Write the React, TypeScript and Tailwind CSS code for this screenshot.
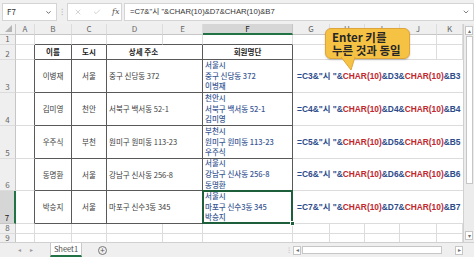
import { Check, ChevronDown, X } from "lucide-react"
import clsx from "clsx"

const members = [
  { name: "이병재", city: "서울", addr: "중구 신당동 372" },
  { name: "김미영", city: "천안", addr: "서북구 백서동 52-1" },
  { name: "우주식", city: "부천", addr: "원미구 원미동 113-23" },
  { name: "동명환", city: "서울", addr: "강남구 신사동 256-8" },
  { name: "박승지", city: "서울", addr: "마포구 신수3동 345" },
]

const COLS = ["A", "B", "C", "D", "E", "F", "G", "H", "I", "J", "K"]

// cell border presets
const LIGHT = "border-r border-b border-[#dcdcdc]"
const DARK = "border-r border-b border-[#595959]"
const RIGHT_DARK = "border-r border-b border-r-[#595959] border-b-[#dcdcdc]"
const BOTTOM_DARK = "border-r border-b border-r-[#dcdcdc] border-b-[#595959]"

function RowHead({ n, active }: { n: number; active?: boolean }) {
  return (
    <div
      className={clsx(
        "flex items-end justify-center pb-px text-[8px] leading-none",
        active
          ? "border-r-2 border-b border-r-[#217346] border-b-[#c6c6c6] bg-[#d6d6d6] text-[#222]"
          : "border-r border-b border-r-[#c6c6c6] border-b-[#dcdcdc] bg-[#efefef] text-[#666]"
      )}
    >
      {n}
    </div>
  )
}

function Formula({ row }: { row: number }) {
  const red = "text-[#c0282d]"
  return (
    <div className="col-span-5 flex items-center border-b border-[#dcdcdc] pl-[4px] font-['Liberation_Sans','Noto_Sans_CJK_KR',sans-serif] text-[8.4px] font-bold whitespace-nowrap text-[#2c4b8a]">
      =C{row}&amp;"시 "&amp;<span className={red}>CHAR(10)</span>&amp;D{row}&amp;
      <span className={red}>CHAR(10)</span>&amp;B{row}
    </div>
  )
}

function Callout() {
  return (
    <div className="absolute top-[4px] left-[325px] h-[31px] w-[85px] rounded-[6px] border border-[#dfa53a] bg-[#f6c244] pt-[2px] pl-[6px] text-[11.5px] leading-[13px] font-bold text-[#262626] shadow-[0_1px_2px_rgba(0,0,0,0.2)]">
      <div>Enter 키를</div>
      <div>누른 것과 동일</div>
      <svg className="absolute top-[28px] left-[14px]" width="17" height="14" viewBox="0 0 17 14">
        <polygon points="1,0 15,0 11,13" fill="#f6c244" />
        <polyline points="1,0 11,13 15,0" fill="none" stroke="#dfa53a" strokeWidth="1" />
      </svg>
    </div>
  )
}

function Sheet() {
  return (
    <div className="relative flex h-[218px]">
      <div className="grid h-[218px] w-[463px] grid-cols-[16px_19px_37px_35px_56px_40px_90px_37px_35px_35px_37px_26px] grid-rows-[11px_10px_15px_33px_33px_33px_32px_33px_10px_10px] overflow-hidden text-[7.5px] text-[#3b3b3b]">
        {/* column headers */}
        <div className="relative border-r border-b border-r-[#c6c6c6] border-b-[#c6c6c6] bg-[#efefef]">
          <svg className="absolute right-[3px] bottom-[2px]" width="7" height="7" viewBox="0 0 7 7">
            <polygon points="7,0 7,7 0,7" fill="#b4b4b4" />
          </svg>
        </div>
        {COLS.map((c) => (
          <div
            key={c}
            className={clsx(
              "flex items-center justify-center text-[8px] leading-none",
              c === "F"
                ? "border-r border-b-2 border-r-[#c6c6c6] border-b-[#217346] bg-[#d6d6d6] text-[#222]"
                : "border-r border-b border-r-[#dcdcdc] border-b-[#c6c6c6] bg-[#efefef] text-[#666]"
            )}
          >
            {c}
          </div>
        ))}

        {/* row 1 */}
        <RowHead n={1} />
        <div className={LIGHT} />
        {["B", "C", "D", "E", "F"].map((c) => (
          <div key={c} className={BOTTOM_DARK} />
        ))}
        {["G", "H", "I", "J", "K"].map((c) => (
          <div key={c} className={LIGHT} />
        ))}

        {/* row 2: table header */}
        <RowHead n={2} />
        <div className={RIGHT_DARK} />
        <div className={clsx(DARK, "flex items-center justify-center font-semibold text-[#222]")}>이름</div>
        <div className={clsx(DARK, "flex items-center justify-center font-semibold text-[#222]")}>도시</div>
        <div className={clsx(DARK, "col-span-2 flex items-center justify-center pr-[22px] font-semibold text-[#222]")}>
          상세 주소
        </div>
        <div className={clsx(DARK, "flex items-center justify-center font-semibold text-[#222]")}>회원명단</div>
        {["G", "H", "I", "J", "K"].map((c) => (
          <div key={c} className={LIGHT} />
        ))}

        {/* rows 3-7 */}
        {members.map((m, i) => {
          const row = i + 3
          const selected = row === 7
          return [
            <RowHead key={`h${row}`} n={row} active={selected} />,
            <div key={`a${row}`} className={RIGHT_DARK} />,
            <div key={`b${row}`} className={clsx(DARK, "flex items-center justify-center")}>
              {m.name}
            </div>,
            <div key={`c${row}`} className={clsx(DARK, "flex items-center justify-center")}>
              {m.city}
            </div>,
            <div key={`d${row}`} className={clsx(DARK, "col-span-2 flex items-center pl-[2px] whitespace-nowrap")}>
              {m.addr}
            </div>,
            <div
              key={`f${row}`}
              className={clsx(DARK, "relative flex flex-col justify-center pl-[2px] leading-[10.7px] font-medium whitespace-nowrap text-[#3a5894]")}
            >
              <span>{m.city}시</span>
              <span>{m.addr}</span>
              <span>{m.name}</span>
              {selected && (
                <>
                  <div className="absolute -inset-px border-2 border-[#1d5f3a]" />
                  <div className="absolute -right-[3px] -bottom-[3px] h-[5px] w-[5px] border border-white bg-[#1d5f3a]" />
                </>
              )}
            </div>,
            <Formula key={`g${row}`} row={row} />,
          ]
        })}

        {/* rows 8-9 */}
        {[8, 9].map((row) => [
          <RowHead key={`h${row}`} n={row} />,
          ...COLS.map((c) => <div key={`${c}${row}`} className={LIGHT} />),
        ])}
      </div>

      {/* vertical scrollbar */}
      <div className="flex w-[11px] flex-col items-center border-l border-[#d0d0d0] bg-[#ececec] text-[6px] leading-none text-[#707070]">
        <div className="mt-[2px] flex h-[9px] w-[8px] items-center justify-center border border-[#c6c6c6] bg-white">▴</div>
        <div className="mt-[1px] h-[148px] w-[7px] border border-[#c6c6c6] bg-white" />
        <div className="flex-1" />
        <div className="mb-[2px] flex h-[9px] w-[8px] items-center justify-center border border-[#c6c6c6] bg-white">▾</div>
      </div>

      <Callout />
    </div>
  )
}

export default function App() {
  return (
    <div className="h-[257px] w-[474px] overflow-hidden bg-white font-['Noto_Sans_CJK_KR',sans-serif]">
      {/* formula bar */}
      <div className="flex h-[24px] items-center bg-[#f0f0f0] pl-[2px] text-[8px] text-[#333]">
        <div className="flex h-[18px] w-[55px] items-center justify-between border border-[#d4d4d4] bg-white pr-[4px] pl-[4px]">
          <span>F7</span>
          <ChevronDown size={7} strokeWidth={3} className="text-[#555]" />
        </div>
        <span className="mx-[4px] text-[9px] text-[#b5b5b5]">⁝</span>
        <div className="flex h-[18px] w-[55px] items-center gap-[11px] border border-[#d4d4d4] bg-white pl-[6px]">
          <X size={8} className="text-[#bdbdbd]" />
          <Check size={8} className="text-[#bdbdbd]" />
          <span className="font-['DejaVu_Serif',serif] text-[8px] text-[#555] italic">fx</span>
        </div>
        <div className="ml-[2px] flex h-[18px] flex-1 items-center justify-between border border-[#d4d4d4] bg-white pr-[3px] pl-[5px] whitespace-nowrap">
          <span className="font-['Liberation_Sans','Noto_Sans_CJK_KR',sans-serif] text-[7.7px]">
            =C7&amp;"시 "&amp;CHAR(10)&amp;D7&amp;CHAR(10)&amp;B7
          </span>
          <ChevronDown size={8} strokeWidth={2.5} className="text-[#666]" />
        </div>
      </div>

      <Sheet />

      {/* sheet tabs + horizontal scrollbar */}
      <div className="flex h-[15px] items-center border-t border-[#d0d0d0] bg-[#efefef] text-[7.5px] leading-none text-[#9a9a9a]">
        <div className="flex w-[50px] justify-center gap-[9px] text-[6px]">
          <span>◂</span>
          <span>▸</span>
        </div>
        <div className="flex h-full w-[32px] items-center justify-center border-x border-b-2 border-x-[#c8c8c8] border-b-[#217346] bg-white text-[#4a4a4a]">
          Sheet1
        </div>
        <div className="ml-[16px] flex h-[9px] w-[9px] items-center justify-center rounded-full border border-[#777] text-[8px] text-[#555]">
          +
        </div>
        <div className="flex-1" />
        <span className="mr-[3px] text-[8px] text-[#b5b5b5]">⁝</span>
        <div className="flex h-[11px] w-[170px] items-center gap-[1px] text-[6px] text-[#707070]">
          <div className="flex h-[9px] w-[8px] items-center justify-center border border-[#c6c6c6] bg-white">◂</div>
          <div className="h-[8px] w-[140px] border border-[#c6c6c6] bg-white" />
          <div className="flex-1" />
          <div className="flex h-[9px] w-[8px] items-center justify-center border border-[#c6c6c6] bg-white">▸</div>
        </div>
        <div className="w-[11px]" />
      </div>
    </div>
  )
}
